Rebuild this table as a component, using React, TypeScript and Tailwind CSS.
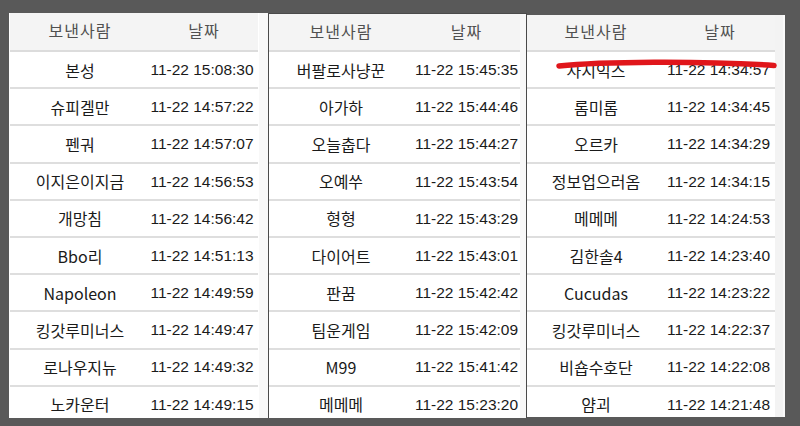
import React from "react";

type Row = [string, string];

const p1: Row[] = [
  ["본성", "11-22 15:08:30"],
  ["슈피겔만", "11-22 14:57:22"],
  ["펜궈", "11-22 14:57:07"],
  ["이지은이지금", "11-22 14:56:53"],
  ["개망침", "11-22 14:56:42"],
  ["Bbo리", "11-22 14:51:13"],
  ["Napoleon", "11-22 14:49:59"],
  ["킹갓루미너스", "11-22 14:49:47"],
  ["로나우지뉴", "11-22 14:49:32"],
  ["노카운터", "11-22 14:49:15"],
];
const p2: Row[] = [
  ["버팔로사냥꾼", "11-22 15:45:35"],
  ["아가하", "11-22 15:44:46"],
  ["오늘춥다", "11-22 15:44:27"],
  ["오예쑤", "11-22 15:43:54"],
  ["형형", "11-22 15:43:29"],
  ["다이어트", "11-22 15:43:01"],
  ["판꿈", "11-22 15:42:42"],
  ["팀운게임", "11-22 15:42:09"],
  ["M99", "11-22 15:41:42"],
  ["메메메", "11-22 15:23:20"],
];
const p3: Row[] = [
  ["사지익스", "11-22 14:34:57"],
  ["롬미롬", "11-22 14:34:45"],
  ["오르카", "11-22 14:34:29"],
  ["정보업으러옴", "11-22 14:34:15"],
  ["메메메", "11-22 14:24:53"],
  ["김한솔4", "11-22 14:23:40"],
  ["Cucudas", "11-22 14:23:22"],
  ["킹갓루미너스", "11-22 14:22:37"],
  ["비숍수호단", "11-22 14:22:08"],
  ["얌괴", "11-22 14:21:48"],
];

const kr = { fontFamily: '"Noto Sans CJK KR", "Noto Sans", sans-serif' };
const num = { fontFamily: '"Liberation Sans", "Noto Sans CJK KR", sans-serif' };

function Table({
  rows,
  nameW,
  headerH,
  datePad,
}: {
  rows: Row[];
  nameW: string;
  headerH: string;
  datePad: string;
}) {
  return (
    <div className="flex-1 flex flex-col min-w-0">
      <div
        className={`${headerH} shrink-0 flex bg-[#f4f4f4] border-b-2 border-[#dcdcdc] text-[#505050] text-[16px] tracking-[1px] pb-[3px] whitespace-nowrap`}
        style={kr}
      >
        <div className={`${nameW} shrink-0 flex items-center justify-center`}>보낸사람</div>
        <div className="flex-1 flex items-center justify-center">날짜</div>
      </div>
      {rows.map(([n, d], i) => (
        <div key={i} className="h-[37.2px] shrink-0 flex border-b-2 border-[#dedede] text-[#1a1a1a] whitespace-nowrap">
          <div className={`${nameW} shrink-0 flex items-center justify-center text-[16px]`} style={kr}>
            {n}
          </div>
          <div className={`flex-1 flex items-center justify-center text-[15.5px] ${datePad}`} style={num}>
            {d}
          </div>
        </div>
      ))}
    </div>
  );
}

export default function App() {
  return (
    <div className="w-[800px] h-[426px] bg-[#595959] relative overflow-hidden flex items-start pt-[13px] pl-[9px]">
      <div className="w-[259px] h-[405px] bg-white border-l border-white flex overflow-hidden">
        <Table rows={p1} nameW="w-[140px]" headerH="h-[39px]" datePad="pr-[4px]" />
        <div className="w-[10px] shrink-0 bg-[#f8f8f8] border-l border-white" />
      </div>
      <div className="w-[259px] h-[405px] bg-white border-l border-t border-r border-[#4a4a4a] flex overflow-hidden relative z-10">
        <Table rows={p2} nameW="w-[144px]" headerH="h-[38px]" datePad="pr-0" />
        <div className="w-[6px] shrink-0 bg-[#f8f8f8]" />
      </div>
      <div className="mt-[2px] w-[258px] h-[402px] bg-white flex overflow-hidden relative">
        <Table rows={p3} nameW="w-[138px]" headerH="h-[37px]" datePad="pr-[3px]" />
        <div className="w-[10px] shrink-0 bg-[#f3f3f3] border-r-2 border-[#fafafa]" />
        <svg className="absolute left-0 top-0" width="258" height="100" viewBox="527 15 258 100">
          <path
            d="M559 66 C 600 61.5, 700 60.5, 774 65.5"
            stroke="#e0161b"
            strokeWidth="5.5"
            strokeLinecap="round"
            fill="none"
          />
        </svg>
      </div>
    </div>
  );
}
